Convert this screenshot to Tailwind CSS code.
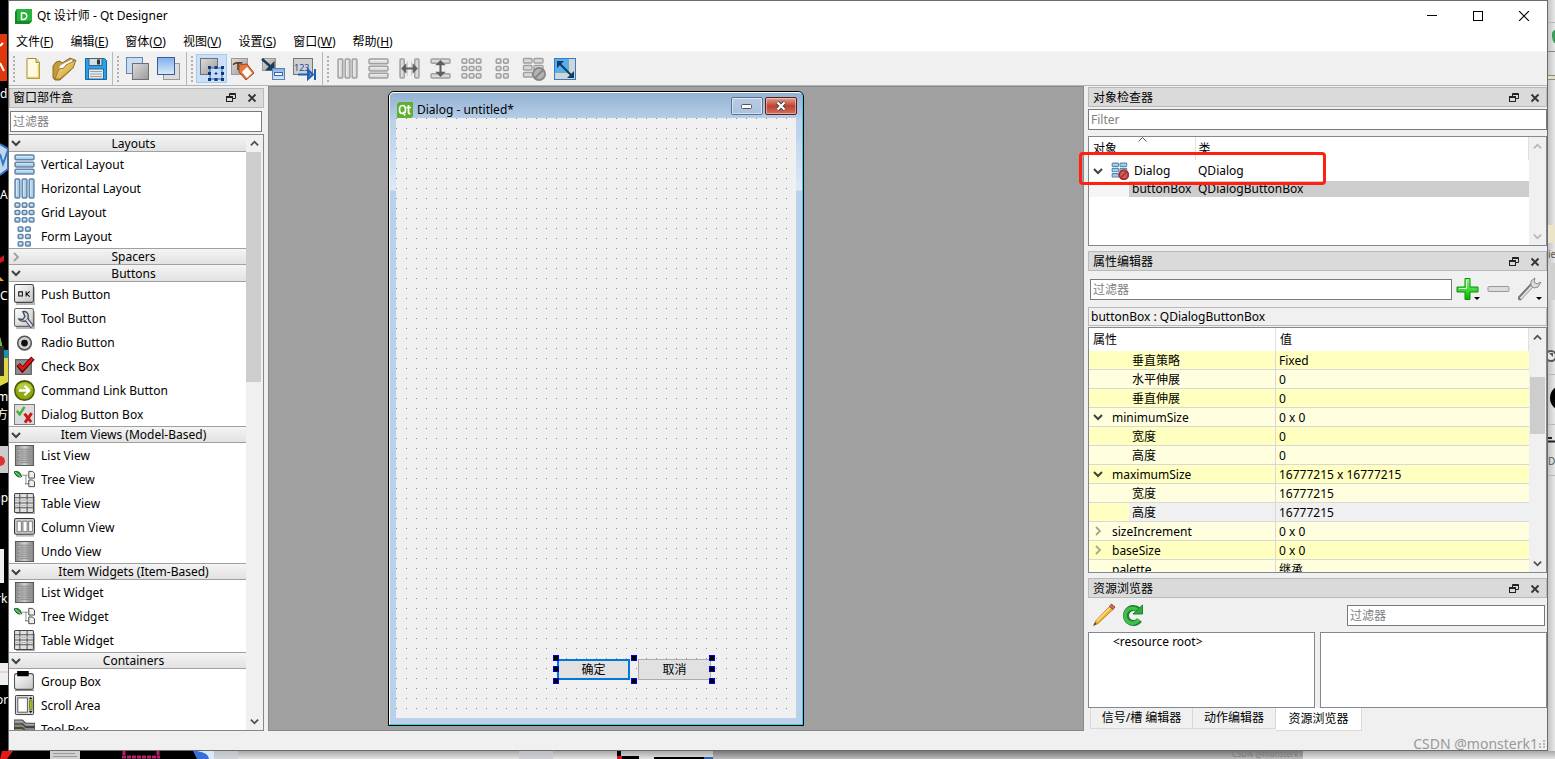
<!DOCTYPE html>
<html lang="zh-CN">
<head>
    <meta charset="UTF-8">
    <meta name="viewport" content="width=device-width, initial-scale=1.0">
    <title>Qt 设计师 - Qt Designer</title>
    <script src="https://cdn.jsdelivr.net/npm/@tailwindcss/browser@4"></script>
    <style>
        body {
            font-family: 'Noto Sans', 'Noto Sans CJK SC', sans-serif;
        }
    </style>
</head>
<body class="h-screen flex flex-col overflow-hidden bg-[#e0e0e0] text-[12px] leading-[18px] text-black select-none">

    <!-- Icon library -->
    <svg class="absolute w-0 h-0" aria-hidden="true">
        <defs>
            <linearGradient id="g-gray" x1="0" y1="0" x2="1" y2="1"><stop offset="0" stop-color="#dcdcdc"/><stop offset="1" stop-color="#9a9a9a"/></linearGradient>
            <linearGradient id="g-blue" x1="0" y1="0" x2="0" y2="1"><stop offset="0" stop-color="#7fb0ee"/><stop offset="1" stop-color="#dbe9fb"/></linearGradient>
            <linearGradient id="g-gold" x1="0" y1="0" x2="1" y2="1"><stop offset="0" stop-color="#fdeaa0"/><stop offset="1" stop-color="#c98f1c"/></linearGradient>
            <linearGradient id="g-green" x1="0" y1="0" x2="0" y2="1"><stop offset="0" stop-color="#8dff7a"/><stop offset="1" stop-color="#00b400"/></linearGradient>
            <linearGradient id="g-face" x1="0" y1="0" x2="1" y2="1"><stop offset="0" stop-color="#ffffff"/><stop offset="1" stop-color="#c4c4c4"/></linearGradient>
            <linearGradient id="g-list" x1="0" y1="0" x2="1" y2="0"><stop offset="0" stop-color="#888"/><stop offset=".5" stop-color="#d0d0d0"/><stop offset="1" stop-color="#808080"/></linearGradient>
        </defs>
        <!-- Layout icons take the outline from text color and the face from fill -->
        <symbol id="vbars" viewBox="0 0 20 20"><g stroke="currentColor" stroke-width="1.400"><rect x="1" y="1" width="4.500" height="18" rx="1"/><rect x="7.800" y="1" width="4.500" height="18" rx="1"/><rect x="14.500" y="1" width="4.500" height="18" rx="1"/></g><path d="M2.500 2v15M9.300 2v15M16 2v15" stroke="#fff" stroke-opacity=".6"/></symbol>
        <symbol id="hbars" viewBox="0 0 20 20"><g stroke="currentColor" stroke-width="1.400"><rect x="1" y="1" width="18" height="4.500" rx="1"/><rect x="1" y="7.800" width="18" height="4.500" rx="1"/><rect x="1" y="14.500" width="18" height="4.500" rx="1"/></g><path d="M2 2.500h16M2 9.300h16M2 16h16" stroke="#fff" stroke-opacity=".6"/></symbol>
        <symbol id="hsplit" viewBox="0 0 20 20"><g stroke="currentColor" stroke-width="1.400"><rect x="1" y="1" width="4" height="18" rx="1"/><rect x="15" y="1" width="4" height="18" rx="1"/></g><path d="M8 3v14M12 3v14" stroke="#ccc"/><path d="M2 10l5-5v4h6V5l5 5-5 5v-4H7v4z" fill="#606060"/></symbol>
        <symbol id="vsplit" viewBox="0 0 20 20"><g stroke="currentColor" stroke-width="1.400"><rect x="1" y="1" width="18" height="4" rx="1"/><rect x="1" y="15" width="18" height="4" rx="1"/></g><path d="M10 2l5 5h-4v6h4l-5 5-5-5h4V7H5z" fill="#606060"/></symbol>
        <symbol id="grid9" viewBox="0 0 20 20"><g stroke="currentColor" stroke-width="1.400"><rect x="1" y="1" width="4.500" height="4" rx="1"/><rect x="7.800" y="1" width="4.500" height="4" rx="1"/><rect x="14.500" y="1" width="4.500" height="4" rx="1"/><rect x="1" y="8" width="4.500" height="4" rx="1"/><rect x="7.800" y="8" width="4.500" height="4" rx="1"/><rect x="14.500" y="8" width="4.500" height="4" rx="1"/><rect x="1" y="15" width="4.500" height="4" rx="1"/><rect x="7.800" y="15" width="4.500" height="4" rx="1"/><rect x="14.500" y="15" width="4.500" height="4" rx="1"/></g><path d="M2 2.500h2M9 2.500h2M15.500 2.500h2M2 9.500h2M9 9.500h2M15.500 9.500h2M2 16.500h2M9 16.500h2M15.500 16.500h2" stroke="#fff" stroke-opacity=".8"/></symbol>
        <symbol id="form6" viewBox="0 0 20 20"><g stroke="currentColor" stroke-width="1.400"><rect x="4" y="1" width="4.500" height="4" rx="1"/><rect x="11" y="1" width="4.500" height="4" rx="1"/><rect x="4" y="8" width="4.500" height="4" rx="1"/><rect x="11" y="8" width="4.500" height="4" rx="1"/><rect x="4" y="15" width="4.500" height="4" rx="1"/><rect x="11" y="15" width="4.500" height="4" rx="1"/></g><path d="M5 2.500h2M12 2.500h2M5 9.500h2M12 9.500h2M5 16.500h2M12 16.500h2" stroke="#fff" stroke-opacity=".8"/></symbol>
        <symbol id="break" viewBox="0 0 24 24"><g stroke="currentColor" stroke-width="1.400"><rect x="1.500" y="1.500" width="8.500" height="4.500" rx="1"/><rect x="12" y="1.500" width="9" height="4.500" rx="1"/><rect x="1.500" y="8.500" width="8.500" height="4.500" rx="1"/><rect x="12" y="8.500" width="9" height="4.500" rx="1"/><rect x="1.500" y="15.500" width="9" height="4.500" rx="1"/></g></symbol>
        <symbol id="chev-down" viewBox="0 0 10 10"><path d="M1 3l4 4 4-4" fill="none" stroke="currentColor" stroke-width="2"/></symbol>
        <symbol id="chev-up" viewBox="0 0 10 10"><path d="M1 7l4-4 4 4" fill="none" stroke="currentColor" stroke-width="2"/></symbol>
        <symbol id="chev-right" viewBox="0 0 10 10"><path d="M3 1l4 4-4 4" fill="none" stroke="currentColor" stroke-width="1.800"/></symbol>
        <symbol id="float" viewBox="0 0 10 10"><path d="M3.500 3V.5h6v5H7M3.500 1.500h6" fill="none" stroke="#222"/><rect x=".5" y="3.500" width="6" height="5" fill="none" stroke="#222"/><path d="M.5 4.500h6" stroke="#222"/></symbol>
        <symbol id="cross" viewBox="0 0 10 10"><path d="M1.500 1.500l7 7M8.500 1.500l-7 7" stroke="#333" stroke-width="1.800"/></symbol>
        <symbol id="i-push" viewBox="0 0 20 20"><path d="M2 19h17V3" stroke="#888" stroke-width="2" fill="none" opacity=".6"/><rect x=".5" y=".5" width="18" height="17" rx="1.500" fill="url(#g-face)" stroke="#444"/><path d="M4.500 7.500h3.500v4H4.500zM11.500 7v5M15 7l-3 2.500 3 2.500" fill="none" stroke="#111"/></symbol>
        <symbol id="i-tool" viewBox="0 0 20 20"><path d="M2 19h17V3" stroke="#888" stroke-width="2" fill="none" opacity=".6"/><rect x=".5" y=".5" width="18" height="17" rx="1.500" fill="url(#g-face)" stroke="#666"/><path d="M8.500 3.500a4 4 0 0 1 5 4.500 4 4 0 0 1-5 4.500 4 4 0 0 1-4-2l4 .3L10.500 8z" fill="#d8dce4" stroke="#444b5c" stroke-width="1.300"/><path d="M12 11l5.500 7" stroke="#444b5c" stroke-width="4"/><path d="M12 11l5 6.500" stroke="#dde0e8" stroke-width="2"/></symbol>
        <symbol id="i-radio" viewBox="0 0 20 20"><circle cx="10" cy="10.500" r="6.500" fill="#d0d0d0" stroke="#555" stroke-width="1.500"/><circle cx="10" cy="10.500" r="3.200" fill="#111"/></symbol>
        <symbol id="i-check" viewBox="0 0 20 20"><rect x="1.500" y="3.500" width="15" height="14" fill="#909090" stroke="#555"/><path d="M4 8l4 5L18 2" fill="none" stroke="#6a0000" stroke-width="4.500"/><path d="M4.500 8.500l3.500 4L17.500 2.500" fill="none" stroke="#e01818" stroke-width="2.500"/></symbol>
        <symbol id="i-link" viewBox="0 0 20 20"><circle cx="10" cy="10" r="9.200" fill="#8faa10" stroke="#4d5c08" stroke-width="1.500"/><path d="M2.500 8a8 8 0 0 1 15 0q-7 3-15 0" fill="#d0e060" opacity=".6"/><path d="M4.500 10h9M10 5.500l4.500 4.500-4.500 4.500" fill="none" stroke="#fff" stroke-width="2.200"/></symbol>
        <symbol id="i-dbb" viewBox="0 0 22 22"><rect x=".5" y=".5" width="21" height="21" fill="#dcdcdc" stroke="#777"/><path d="M3 7l3 4 5-8" fill="none" stroke="#48b030" stroke-width="2.500"/><path d="M11 10l7 9M18.500 9.500l-7 10" stroke="#c81818" stroke-width="3"/></symbol>
        <symbol id="i-list" viewBox="0 0 20 22"><rect x=".5" y=".5" width="19" height="21" fill="url(#g-list)" stroke="#555"/><path d="M3 4.500h2M3 8.500h2M3 12.500h2M3 16.500h2M6 4.500h10M6 6.500h10M6 8.500h10M6 10.500h10M6 12.500h10M6 14.500h10M6 16.500h10M6 18.500h10" stroke="#787878" stroke-width=".8"/></symbol>
        <symbol id="i-tree" viewBox="0 0 22 18"><path d="M0 1q6-2 8 5-5 2-8-5z" fill="#2c9c3c" stroke="#0a4a18"/><path d="M1 1l7 6" stroke="#9de8a0"/><path d="M9 4.500h5M12.500 5v9M12 13.500h3" stroke="#222" stroke-dasharray="1 1" fill="none"/><path d="M15.500.5h4l2 2v5h-6zM15.500 9.500h4l2 2v5h-6z" fill="#eee" stroke="#444"/></symbol>
        <symbol id="i-table" viewBox="0 0 20 20"><path d="M2 19.500h17.500V3" stroke="#888" fill="none" opacity=".7"/><rect x=".5" y=".5" width="18" height="18" rx="1" fill="#e0e0e0" stroke="#444"/><path d="M.5 4.500h18M.5 9.500h18M.5 14h18M5.500.5v18M12.500.5v18" stroke="#555"/><path d="M1 7h17M1 12h17" stroke="#bbb"/></symbol>
        <symbol id="i-column" viewBox="0 0 20 18"><rect x=".5" y=".5" width="19" height="15" rx="1.500" fill="#cfcfcf" stroke="#333"/><path d="M3 3h4v10H3zM8.500 3h4v10h-4zM14 3h3.500v10H14z" fill="#fff" stroke="#666" stroke-width=".8"/><path d="M2 17h17" stroke="#999"/></symbol>
        <symbol id="i-group" viewBox="0 0 20 20"><rect x=".5" y="2.500" width="18" height="15" rx="2" fill="url(#g-face)" stroke="#555"/><path d="M1 18.500h18" stroke="#888"/><rect x="3" y="0" width="11" height="5" fill="#000"/></symbol>
        <symbol id="i-scroll" viewBox="0 0 20 22"><rect x="0.500" y=".5" width="19" height="20" rx="1" fill="#d8d8d8" stroke="#333"/><rect x="3" y="3" width="10" height="15" fill="#fff" stroke="#555"/><path d="M14.500 4.500l2-2.500 2 2.500zM14.500 16.500l2 2.500 2-2.500z" fill="#111"/><rect x="15" y="6" width="3" height="9" fill="#9ac020" stroke="#4d6008" stroke-width=".6"/></symbol>
        <symbol id="i-toolbox" viewBox="0 0 20 20"><path d="M0 1h8l3 3h9v3h-9l-3-3H0z" fill="#aaa" stroke="#444"/><path d="M0 5h8l3 3h9v3h-9l-3-3H0z" fill="#888" stroke="#444"/><path d="M0 9h8l3 3h9v8H0z" fill="#8fae10" stroke="#444"/></symbol>
    </svg>

    <div class="flex-1 min-h-0 flex">
        <!-- Desktop showing left of the window -->
        <svg class="w-[8px] h-full shrink-0 bg-black" aria-hidden="true" font-size="12" fill="#fff">
            <rect y="34" width="7" height="47" fill="#e0380c"/><path d="M0 46l3-3M0 63l4 8" stroke="#fff" stroke-width="2"/>
            <path d="M0 144l8 5v20l-8 6" fill="#bfd8f0"/><path d="M0 144l8 5v20l-8 6M0 154l3 10 5-14" stroke="#3478c0" stroke-width="2" fill="none"/>
            <path d="M0 258l4-3v6l-4 2z" fill="#d01818"/><path d="M0 281h4l-4-4z" fill="#f0a020"/>
            <path d="M0 337l3 12 5 3v30l-8 4z" fill="#e0d840"/><path d="M0 337l3 12-3 1z" fill="#70c040"/><path d="M4 350h4v8H4z" fill="#2090b0"/><path d="M0 346h4v30H0z" fill="#303030"/>
            <rect y="446" width="8" height="27" fill="#ccc"/><circle cx="0" cy="461" r="5" fill="#e03030"/>
            <rect y="549" width="4" height="34" fill="#eee"/><rect y="663" width="8" height="22" fill="#eee"/><path d="M0 672h8" stroke="#f0b0a0"/>
            <text x="0" y="98">d</text><text x="0" y="199">A</text><text x="0" y="300">C</text><text x="-3" y="401">m</text><text x="-4" y="419">方</text><text x="-6" y="502">ap</text><text x="-4" y="603">rk</text><text x="-4" y="704">or</text>
        </svg>

        <!-- Application window -->
        <div class="flex-1 min-w-0 flex flex-col border border-[#6b6b6b] bg-[#f0f0f0]">
            <header class="h-[30px] shrink-0 bg-white flex items-center pl-[6px]">
                <svg class="w-[17px] h-[15px]" viewBox="0 0 17 15"><path d="M2 0h15v12l-3 3H0V3z" fill="#28b43c"/><path d="M0 3l2-3v12l-2 3zM14 15l3-3H2l-2 3z" fill="#128a28"/><path d="M6.500 3.500v7M6 4h2.500a3 3 0 0 1 0 6.500H6" fill="none" stroke="#fff" stroke-width="1.500"/></svg>
                <h1 class="pl-[5px] flex-1">Qt 设计师 - Qt Designer</h1>
                <button class="w-[46px] h-[29px] flex items-center justify-center" aria-label="最小化"><svg class="w-[10px] h-[10px]"><path d="M0 4.500h10" stroke="#000"/></svg></button>
                <button class="w-[46px] h-[29px] flex items-center justify-center" aria-label="最大化"><svg class="w-[10px] h-[10px]"><rect x=".5" y=".5" width="9" height="9" fill="none" stroke="#000"/></svg></button>
                <button class="w-[46px] h-[29px] flex items-center justify-center" aria-label="关闭"><svg class="w-[10px] h-[10px]"><path d="M0 0l10 10M10 0L0 10" stroke="#000" stroke-width="1.200"/></svg></button>
            </header>

            <nav class="h-[21px] shrink-0 bg-white border-b border-[#f5f5f5] flex items-center gap-[17px] pl-[7px] pt-[2px]">
                <button>文件(<u>F</u>)</button>
                <button>编辑(<u>E</u>)</button>
                <button>窗体(<u>O</u>)</button>
                <button>视图(<u>V</u>)</button>
                <button>设置(<u>S</u>)</button>
                <button>窗口(<u>W</u>)</button>
                <button>帮助(<u>H</u>)</button>
            </nav>

            <div class="h-[34px] shrink-0 flex items-center border-b border-[#b4b4b4]" role="toolbar">
                <div class="h-full flex items-center border-r border-[#b8b8b8] pr-px">
                    <span class="w-[9px] h-[26px] flex justify-center"><i class="border-l-2 border-dotted border-[#b0b0b0]"></i></span>
                    <button class="w-[31px] h-[29px] flex items-center justify-center" aria-label="新建"><svg class="w-[24px] h-[24px]" viewBox="0 0 24 24"><path d="M5 1.500h9l3.500 4v16H5z" fill="#fffbe0" stroke="#a88a30"/><path d="M14 1.500v4h3.500" fill="#e8d890" stroke="#a88a30"/><path d="M6 20.500h10.500V7" stroke="#e8d060" stroke-width="1.500" fill="none"/></svg></button>
                    <button class="w-[31px] h-[29px] flex items-center justify-center" aria-label="打开"><svg class="w-[26px] h-[24px]" viewBox="0 0 26 24"><path d="M1 21V9l3-4 4-1 2 2 8-5 5 2-2 8-13 12H3z" fill="#c79a38" stroke="#8a6a24"/><path d="M4 18L8 8l12-6 2 4L8 19z" fill="#fff" stroke="#b0a070"/><path d="M3 22l4-10 5-1 2-3 10-5-3 8-13 11z" fill="url(#g-gold)" stroke="#9a7828"/></svg></button>
                    <button class="w-[31px] h-[29px] flex items-center justify-center" aria-label="保存"><svg class="w-[24px] h-[24px]" viewBox="0 0 24 24"><path d="M1.500 1.500h19l2 2v19h-21z" fill="#2ba0e8" stroke="#1068a8"/><rect x="5" y="1.500" width="13" height="7" fill="#d8dde2" stroke="#3a6080"/><rect x="13" y="2.500" width="3" height="5" fill="#333"/><rect x="4.500" y="12" width="15" height="10" fill="#e8e8e8" stroke="#1a70a8"/><path d="M6 14.500h12M6 17h12M6 19.500h12" stroke="#a0a0a0"/></svg></button>
                </div>
                <div class="h-full flex items-center border-r border-[#b8b8b8] pr-[2px]">
                    <span class="w-[9px] h-[26px] flex justify-center"><i class="border-l-2 border-dotted border-[#b0b0b0]"></i></span>
                    <button class="w-[31px] h-[29px] flex items-center justify-center" aria-label="后置"><svg class="w-[25px] h-[24px]" viewBox="0 0 25 24"><rect x="1.500" y=".5" width="16" height="16" fill="#c9dcf5" stroke="#6884b0"/><rect x="7.500" y="6.500" width="16" height="16" fill="url(#g-gray)" stroke="#707070"/></svg></button>
                    <button class="w-[31px] h-[29px] flex items-center justify-center" aria-label="前置"><svg class="w-[25px] h-[24px]" viewBox="0 0 25 24"><rect x="7.500" y="6.500" width="16" height="16" fill="#dcdcdc" stroke="#999"/><rect x="1.500" y=".5" width="17" height="17" fill="url(#g-blue)" stroke="#3a5c90"/></svg></button>
                </div>
                <div class="h-full flex items-center border-r border-[#b8b8b8] pr-[2px]">
                    <span class="w-[9px] h-[26px] flex justify-center"><i class="border-l-2 border-dotted border-[#b0b0b0]"></i></span>
                    <button class="w-[31px] h-[29px] flex items-center justify-center bg-[#c9e0f7] border border-[#a2cdf2]" aria-label="编辑窗口部件" aria-pressed="true"><svg class="w-[25px] h-[24px]" viewBox="0 0 25 24"><rect x="1.500" y="1.500" width="17" height="16" fill="url(#g-gray)" stroke="#707070"/><rect x="11" y="11" width="12" height="11" fill="#c4dcf8" stroke="#3a60a0"/><g fill="#123a78"><rect x="9" y="9" width="3" height="3"/><rect x="15.500" y="9" width="3" height="3"/><rect x="22" y="9" width="3" height="3"/><rect x="9" y="15" width="3" height="3"/><rect x="22" y="15" width="3" height="3"/><rect x="9" y="21" width="3" height="3"/><rect x="15.500" y="21" width="3" height="3"/><rect x="22" y="21" width="3" height="3"/></g><path d="M17 15v3M15.500 16.500h3" stroke="#123a78"/></svg></button>
                    <button class="w-[31px] h-[29px] flex items-center justify-center" aria-label="编辑信号/槽"><svg class="w-[25px] h-[24px]" viewBox="0 0 25 24"><rect x="1.500" y="1.500" width="16" height="16" fill="url(#g-gray)" stroke="#999"/><path d="M3.500 8q0-3 9-2M8 6v7" fill="none" stroke="#5a3020" stroke-width="1.500"/><path d="M9 8l8-1 7 9-8 7-7-8z" fill="#e87840" stroke="#a04818"/><path d="M12 15l5-5 5 6-5 5z" fill="#fff"/></svg></button>
                    <button class="w-[31px] h-[29px] flex items-center justify-center" aria-label="编辑伙伴"><svg class="w-[25px] h-[24px]" viewBox="0 0 25 24"><rect x="1.500" y="1.500" width="13" height="12" fill="url(#g-gray)" stroke="#999"/><path d="M1 2l9 8" stroke="#1a3c58" stroke-width="2.500"/><path d="M13.500 4v9.500H4z" fill="#1a3c58"/><rect x="11.500" y="11.500" width="12" height="11" fill="url(#g-blue)" stroke="#6080a8"/><rect x="13.500" y="15.500" width="8" height="3" fill="#fff" stroke="#3a68b0"/></svg></button>
                    <button class="w-[31px] h-[29px] flex items-center justify-center" aria-label="编辑 Tab 顺序"><svg class="w-[25px] h-[24px]" viewBox="0 0 25 24"><rect x="1.500" y="1.500" width="19" height="16" fill="#cfcfcf" stroke="#777"/><text x="2" y="14" font-size="9" fill="#1848a0">123</text><path d="M6 17.500h12M16 13l5 4.500-5 4.500zM23 12v11" fill="#68a8f0" stroke="#2060b0" stroke-width="2"/></svg></button>
                </div>
                <div class="h-full flex items-center text-[#a0a0a0] fill-[#dadada]">
                    <span class="w-[9px] h-[26px] flex justify-center"><i class="border-l-2 border-dotted border-[#b0b0b0]"></i></span>
                    <button class="w-[31px] h-[29px] flex items-center justify-center" aria-label="水平布局" disabled><svg class="w-[21px] h-[21px]"><use href="#vbars"/></svg></button>
                    <button class="w-[31px] h-[29px] flex items-center justify-center" aria-label="垂直布局" disabled><svg class="w-[21px] h-[21px]"><use href="#hbars"/></svg></button>
                    <button class="w-[31px] h-[29px] flex items-center justify-center" aria-label="使用分裂器水平布局" disabled><svg class="w-[21px] h-[21px]"><use href="#hsplit"/></svg></button>
                    <button class="w-[31px] h-[29px] flex items-center justify-center" aria-label="使用分裂器垂直布局" disabled><svg class="w-[21px] h-[21px]"><use href="#vsplit"/></svg></button>
                    <button class="w-[31px] h-[29px] flex items-center justify-center" aria-label="栅格布局" disabled><svg class="w-[21px] h-[21px]"><use href="#grid9"/></svg></button>
                    <button class="w-[31px] h-[29px] flex items-center justify-center" aria-label="窗体布局" disabled><svg class="w-[21px] h-[21px]"><use href="#form6"/></svg></button>
                    <button class="w-[31px] h-[29px] flex items-center justify-center" aria-label="打破布局" disabled><svg class="w-[24px] h-[24px]" viewBox="0 0 24 24"><use href="#break"/><circle cx="17" cy="17" r="6" fill="#b4b4b4" stroke="#888" stroke-width="2"/><path d="M13 21l8-8" stroke="#888" stroke-width="2"/></svg></button>
                    <button class="w-[31px] h-[29px] flex items-center justify-center" aria-label="调整大小"><svg class="w-[24px] h-[24px]" viewBox="0 0 24 24"><rect x="1.500" y="1.500" width="21" height="21" fill="#d4d4d4" stroke="#2f7fc8"/><rect x="2" y="2" width="14" height="14" fill="#58b0e8"/><path d="M6 6l13 13" stroke="#123c60" stroke-width="2"/><path d="M4 4h7l-7 7zM21 21h-7l7-7z" fill="#123c60"/></svg></button>
                </div>
            </div>

            <main class="flex-1 min-h-0 flex gap-1">
                <!-- Widget box -->
                <section class="w-[255px] shrink-0 flex flex-col pt-[2px]">
                    <div class="h-[20px] shrink-0 bg-[#dadada] border border-[#b9b9b9] flex items-center pl-[3px] pr-[6px]">
                        <h2 class="flex-1">窗口部件盒</h2>
                        <button class="w-[10px] mr-[11px]" aria-label="浮动"><svg class="w-[10px] h-[10px]"><use href="#float"/></svg></button>
                        <button class="w-[10px]" aria-label="关闭"><svg class="w-[10px] h-[10px]"><use href="#cross"/></svg></button>
                    </div>
                    <input class="h-[21px] shrink-0 ml-px mr-[2px] mt-[3px] mb-[2px] px-[2px] bg-white border border-[#7a7a7a] placeholder:text-[#808080]" placeholder="过滤器" aria-label="过滤器">
                    <div class="flex-1 min-h-0 flex bg-white border border-[#828790] border-l-0">
                        <div id="toolbox" class="flex-1 overflow-hidden"></div>
                        <div class="w-[17px] bg-[#f0f0f0] flex flex-col items-center text-[#505050]">
                            <button class="h-[17px] flex items-center" aria-label="向上滚动"><svg class="w-[9px] h-[9px]"><use href="#chev-up"/></svg></button>
                            <div class="flex-1 w-full"><div class="h-[41%] w-[15px] bg-[#cdcdcd]"></div></div>
                            <button class="h-[17px] flex items-center" aria-label="向下滚动"><svg class="w-[9px] h-[9px]"><use href="#chev-down"/></svg></button>
                        </div>
                    </div>
                </section>

                <!-- Form editing area -->
                <section class="flex-1 relative bg-[#a0a0a0] border border-[#828790] overflow-hidden">
                    <div class="absolute left-[119px] top-[4px] w-[416px] h-[635px] flex flex-col border border-black rounded-t-[6px] bg-[#b9d1ea] overflow-hidden">
                        <div class="flex-1 min-h-0 flex flex-col rounded-t-[5px] border border-t-white border-l-white border-r-[#2ad0ee] border-b-[#2ad0ee] bg-[linear-gradient(#94b2d3_0px,#bcd3ec_30px,#bcd3ec_36px,#dde9f7_97px,#b9d1ea_98px)]">
                            <div class="h-[25px] shrink-0 flex pl-[7px] pr-[5px]">
                                <svg class="w-[16px] h-[16px] mt-[9px]" viewBox="0 0 16 16"><path d="M2 0h14v14l-2 2H0V2z" fill="#60b030"/><path d="M5.500 3.500c-4 0-4 8 0 8s4-8 0-8M6 10l2 3.500M11.500 3v7.500q0 1.500 2 1M9.500 5.500h4.500" fill="none" stroke="#fff" stroke-width="1.700"/></svg>
                                <h3 class="flex-1 pl-[4px] pt-[8px]">Dialog - untitled*</h3>
                                <button class="w-[32px] h-[18px] mt-[4px] mr-[2px] rounded-[2px] border border-[#5b7391] outline outline-white/50 -outline-offset-2 bg-linear-to-b from-[#b9cce2] to-[#a9c2df] flex items-center justify-center" aria-label="最小化"><svg class="w-[12px] h-[6px]"><rect x=".5" y="1.500" width="10" height="4" rx="1" fill="#fff" stroke="#556"/></svg></button>
                                <button class="w-[32px] h-[18px] mt-[4px] rounded-[2px] border border-[#5a1c18] outline outline-white/40 -outline-offset-2 bg-linear-to-b from-[#e0a090] via-[#c0402c] to-[#d07060] flex items-center justify-center" aria-label="关闭"><svg class="w-[12px] h-[10px]" viewBox="0 0 12 10"><path d="M2.500 1.500l7 7M9.500 1.500l-7 7" stroke="#445" stroke-width="4"/><path d="M2.500 1.500l7 7M9.500 1.500l-7 7" stroke="#fff" stroke-width="2.200"/></svg></button>
                            </div>
                            <div class="flex-1 relative mx-[6px] mb-[6px] bg-[#f0f0f0]">
                                <svg class="absolute inset-0 w-full h-full"><defs><pattern id="dots" width="10" height="10" patternUnits="userSpaceOnUse"><rect width="1" height="1" fill="#8c8c8c"/></pattern></defs><rect width="100%" height="100%" fill="url(#dots)"/></svg>
                                <div class="absolute left-[161px] top-[541px] flex gap-2">
                                    <button class="w-[73px] h-[21px] bg-[#e1e1e1] border-2 border-[#0078d7] flex items-center justify-center">确定</button>
                                    <button class="w-[73px] h-[21px] bg-[#e1e1e1] border border-[#adadad] flex items-center justify-center">取消</button>
                                </div>
                                <svg class="absolute left-[157px] top-[537px] w-[162px] h-[30px]"><g fill="#000" stroke="#0000e0"><rect x=".5" y=".5" width="5" height="5"/><rect x="78.500" y=".5" width="5" height="5"/><rect x="156.500" y=".5" width="5" height="5"/><rect x=".5" y="11.500" width="5" height="5"/><rect x="156.500" y="11.500" width="5" height="5"/><rect x=".5" y="23.500" width="5" height="5"/><rect x="78.500" y="23.500" width="5" height="5"/><rect x="156.500" y="23.500" width="5" height="5"/></g></svg>
                            </div>
                        </div>
                    </div>
                </section>

                <!-- Docked editors -->
                <aside class="w-[459px] shrink-0 flex flex-col pt-px">
                    <section class="relative flex flex-col">
                        <div class="h-[20px] bg-[#dadada] border border-[#b9b9b9] flex items-center pl-[4px] pr-[6px] pt-px">
                            <h2 class="flex-1">对象检查器</h2>
                            <button class="w-[10px] mr-[11px]" aria-label="浮动"><svg class="w-[10px] h-[10px]"><use href="#float"/></svg></button>
                            <button class="w-[10px]" aria-label="关闭"><svg class="w-[10px] h-[10px]"><use href="#cross"/></svg></button>
                        </div>
                        <input class="h-[21px] mt-[2px] px-[2px] bg-white border border-[#7a7a7a] placeholder:text-[#808080]" placeholder="Filter" aria-label="Filter">
                        <div class="h-[110px] mt-[6px] bg-white border border-[#828790] flex">
                            <div class="flex-1 relative">
                                <table class="w-full table-fixed border-collapse">
                                    <thead>
                                        <tr class="h-[23px] text-left">
                                            <th class="w-[106px] p-0 pl-[4px] font-normal border-r border-[#e0e0e0]">对象</th>
                                            <th class="p-0 pl-[3px] font-normal border-r border-[#e0e0e0]">类</th>
                                        </tr>
                                    </thead>
                                    <tbody>
                                        <tr class="h-[21px]">
                                            <td class="p-0"><div class="flex items-center pl-[4px]"><svg class="w-[10px] h-[10px] text-[#404040]"><use href="#chev-down"/></svg><svg class="w-[18px] h-[18px] ml-[8px] mr-[5px] text-[#5c86ac] fill-[#9fd0f0]" viewBox="0 0 24 24"><use href="#break"/><circle cx="17" cy="17" r="6" fill="#d06060" stroke="#a03030" stroke-width="2.500"/><path d="M13 21l8-8" stroke="#a03030" stroke-width="2"/></svg>Dialog</div></td>
                                            <td class="p-0 pl-[3px]">QDialog</td>
                                        </tr>
                                        <tr class="h-[16px] leading-[16px]">
                                            <td class="p-0"><div class="flex"><span class="w-[40px] bg-[#f5f5f5]"></span><span class="flex-1 pl-[3px] bg-[#cdcdcd]">buttonBox</span></div></td>
                                            <td class="p-0 pl-[3px] bg-[#cdcdcd]">QDialogButtonBox</td>
                                        </tr>
                                    </tbody>
                                </table>
                                <svg class="absolute left-[49px] top-0 w-[9px] h-[5px]"><path d="M.5 4.500l4-4 4 4" fill="none" stroke="#555"/></svg>
                            </div>
                            <div class="w-[17px] bg-[#f0f0f0] flex flex-col items-center justify-between text-[#b8b8b8]">
                                <button class="h-[19px] flex items-center" aria-label="向上滚动"><svg class="w-[9px] h-[9px]"><use href="#chev-up"/></svg></button>
                                <button class="h-[17px] flex items-center" aria-label="向下滚动"><svg class="w-[9px] h-[9px]"><use href="#chev-down"/></svg></button>
                            </div>
                        </div>
                        <div class="absolute left-[-9px] top-[65px] w-[247px] h-[33px] border-3 border-[#ff2010] rounded-[4px]"></div>
                    </section>

                    <section class="flex flex-col mt-[5px]">
                        <div class="h-[20px] bg-[#dadada] border border-[#b9b9b9] flex items-center pl-[4px] pr-[6px] pt-px">
                            <h2 class="flex-1">属性编辑器</h2>
                            <button class="w-[10px] mr-[11px]" aria-label="浮动"><svg class="w-[10px] h-[10px]"><use href="#float"/></svg></button>
                            <button class="w-[10px]" aria-label="关闭"><svg class="w-[10px] h-[10px]"><use href="#cross"/></svg></button>
                        </div>
                        <div class="h-[36px] flex items-center pl-[2px] pr-[5px]">
                            <input class="flex-1 h-[21px] px-[2px] bg-white border border-[#7a7a7a] placeholder:text-[#808080]" placeholder="过滤器" aria-label="过滤属性">
                            <button class="ml-[4px]" aria-label="添加动态属性"><svg class="w-[24px] h-[24px]" viewBox="0 0 24 24"><path d="M9 1.500h5V10h8v5h-8v7.500H9V15H1v-5h8z" fill="url(#g-green)" stroke="#089008"/><path d="M10.500 3v8.500H3" stroke="#d8ffd0" fill="none"/><path d="M18 20h6l-3 3z" fill="#000"/></svg></button>
                            <button class="ml-[7px]" aria-label="删除动态属性" disabled><svg class="w-[24px] h-[24px]" viewBox="0 0 24 24"><rect x="1" y="9.500" width="21" height="5" rx="1" fill="#dcdcdc" stroke="#999"/></svg></button>
                            <button class="ml-[7px]" aria-label="配置属性编辑器"><svg class="w-[24px] h-[24px]" viewBox="0 0 24 24"><path d="M2 21L15 7" stroke="#777" stroke-width="4.500" stroke-linecap="round"/><path d="M3 21L16 7" stroke="#e0e0e0" stroke-width="2" stroke-linecap="round"/><path d="M13 9V4l4-3-1 4 3 2 4-2-3 5-4 1z" fill="#ddd" stroke="#888"/><path d="M18 20h6l-3 3z" fill="#000"/></svg></button>
                        </div>
                        <p class="h-[19px] border border-[#b9b9b9] pl-[2px] flex items-center">buttonBox : QDialogButtonBox</p>
                        <div class="h-[246px] mt-px bg-white border border-[#828790] flex">
                            <div class="flex-1 overflow-hidden">
                                <table class="w-full table-fixed border-separate border-spacing-0">
                                    <thead>
                                        <tr class="h-[23px] text-left">
                                            <th class="w-[187px] p-0 pl-[4px] font-normal border-r border-[#e0e0e0]">属性</th>
                                            <th class="p-0 pl-[4px] font-normal border-r border-[#e0e0e0]">值</th>
                                        </tr>
                                    </thead>
                                    <tbody id="properties"></tbody>
                                </table>
                            </div>
                            <div class="w-[17px] bg-[#f0f0f0] flex flex-col items-center text-[#505050]">
                                <button class="h-[19px] flex items-center" aria-label="向上滚动"><svg class="w-[9px] h-[9px]"><use href="#chev-up"/></svg></button>
                                <div class="flex-1 w-full pt-[30px] pl-px"><div class="h-[57px] w-[15px] bg-[#cdcdcd]"></div></div>
                                <button class="h-[17px] flex items-center" aria-label="向下滚动"><svg class="w-[9px] h-[9px]"><use href="#chev-down"/></svg></button>
                            </div>
                        </div>
                    </section>

                    <section class="flex-1 min-h-0 flex flex-col mt-[5px]">
                        <div class="h-[20px] shrink-0 bg-[#dadada] border border-[#b9b9b9] flex items-center pl-[4px] pr-[6px] pt-px">
                            <h2 class="flex-1">资源浏览器</h2>
                            <button class="w-[10px] mr-[11px]" aria-label="浮动"><svg class="w-[10px] h-[10px]"><use href="#float"/></svg></button>
                            <button class="w-[10px]" aria-label="关闭"><svg class="w-[10px] h-[10px]"><use href="#cross"/></svg></button>
                        </div>
                        <div class="h-[34px] shrink-0 flex items-center pl-[4px] pr-[2px]">
                            <button aria-label="编辑资源"><svg class="w-[24px] h-[24px]" viewBox="0 0 24 24"><path d="M1.500 22.500L4 17.500 18 3l3.500 3L6 20.500z" fill="#f0b030" stroke="#b07c20" stroke-width=".8"/><path d="M5 18L18 5" stroke="#ffe090" stroke-width="1.500"/><path d="M17.500 3.500l2-2.500 3.500 3-2 2.500z" fill="#c87058" stroke="#905040"/><path d="M1.500 22.500l1.500-3 1.500 1.500z" fill="#333"/></svg></button>
                            <button class="ml-[5px]" aria-label="重新加载"><svg class="w-[24px] h-[24px]" viewBox="0 0 24 24"><path d="M18.500 17a7.500 7.500 0 1 1-1-10" fill="none" stroke="#1a8428" stroke-width="6"/><path d="M18 16.500a7.500 7.500 0 1 1-1-9" fill="none" stroke="#44bc50" stroke-width="3.500"/><path d="M21.500 2v9H12z" fill="#30a840" stroke="#1a8428"/></svg></button>
                            <input class="w-[198px] h-[21px] ml-auto px-[2px] bg-white border border-[#7a7a7a] placeholder:text-[#808080]" placeholder="过滤器" aria-label="过滤资源">
                        </div>
                        <div class="flex-1 grid grid-cols-2 gap-[5px]">
                            <div class="bg-white border border-[#828790] pl-[24px]">&lt;resource root&gt;</div>
                            <div class="bg-white border border-[#828790]"></div>
                        </div>
                        <div class="h-[23px] shrink-0 flex items-start pl-[2px]" role="tablist">
                            <button class="w-[103px] h-[21px] border border-t-0 border-[#d9d9d9] bg-[#f0f0f0] flex items-center justify-center" role="tab">信号/槽 编辑器</button>
                            <button class="w-[83px] h-[21px] border border-t-0 border-l-0 border-[#d9d9d9] bg-[#f0f0f0] flex items-center justify-center" role="tab">动作编辑器</button>
                            <button class="w-[86px] h-[23px] border border-t-0 border-l-0 border-[#d9d9d9] bg-white flex items-center justify-center" role="tab" aria-selected="true">资源浏览器</button>
                        </div>
                    </section>
                </aside>
            </main>

            <footer class="h-[19px] shrink-0 flex items-center justify-end gap-px pr-[2px] pt-[7px]">
                <span class="text-[14px] leading-[14px] text-[#999]">CSDN @monsterk1</span>
                <svg class="w-[6px] h-[8px]"><path d="M4 0h2v2H4zM0 3h2v2H0zM4 3h2v2H4zM0 6h2v2H0zM4 6h2v2H4z" fill="#b8b8b8"/></svg>
            </footer>
        </div>

        <!-- Page behind, right of the window -->
        <svg class="w-[7px] h-full shrink-0 bg-linear-to-r from-[#c4c4c4] to-[#e8e8e8]" aria-hidden="true" font-size="10" fill="#555">
            <path d="M0 22.500h7M0 374.500h7M0 424.500h7M0 475.500h7" stroke="#b8b8b8"/><path d="M0 51.500h7M0 75.500h7M0 79.500h7" stroke="#888"/>
            <rect y="76" width="7" height="3" fill="#e0e0c0"/><rect y="225" width="7" height="18" fill="#ece4c8"/><rect y="263" width="7" height="37" fill="#d0d0d0"/>
            <path d="M7 30q-4 1-3 7t3 6z" fill="#3c9c60"/><circle cx="3" cy="356" r="5" fill="#e8e8e8" stroke="#555" stroke-width="2"/><path d="M1 353h4v4z" fill="#555"/><circle cx="15" cy="398" r="13" fill="#000"/>
            <path d="M0 438h4M0 441.500h7" stroke="#222" stroke-width="2"/>
            <text x="0" y="258">ie</text><text x="0" y="465">D</text>
        </svg>
    </div>

    <!-- Strip under the window -->
    <div class="h-[8px] shrink-0 flex overflow-hidden bg-linear-to-b from-[#a8a8a8] to-[#e4e4e4]" aria-hidden="true">
        <svg class="w-[238px] h-[8px] shrink-0"><rect width="214" height="8" fill="#000"/><path d="M2 0h11l-6 8H0z" fill="#e81818"/><path d="M50 0h30v8H50z" fill="#d0d0d0"/><path d="M53 2.500h22M53 5.500h24" stroke="#999"/><path d="M124 0v6M158 0v6M122 6h38" stroke="#b82070" stroke-width="3" stroke-dasharray="4 1"/><path d="M193 0h21v8h-17z" fill="#3870d8"/><path d="M197 0q12 2 12 8h5V0z" fill="#dce8fa"/><path d="M214 0h24v8h-24z" fill="#c8ccd2" opacity=".7"/></svg>
        <svg class="w-[379px] h-[8px] shrink-0"><path d="M281 0h34v8h-34z" fill="#c4c8ce" opacity=".7"/></svg>
        <svg class="w-[96px] h-[8px] shrink-0"><path d="M0 0h4v5h18v3H0zM37 6h55v2H37z" fill="#000"/><path d="M0 5h5v3H0z" fill="#d01818"/><path d="M87 6h9v2h-9z" fill="#3060b0"/></svg>
        <div class="w-[590px] bg-linear-to-b from-[#787878] to-[#bcbcbc] text-right text-[8px] leading-[6px] text-[#787878]">CSDN @monsterk1</div>
    </div>

    <script>
        // Sections of the widget box; closed ones have no items
        const sections = [
            { title: 'Layouts', items: [['Vertical Layout', 'hbars'], ['Horizontal Layout', 'vbars'], ['Grid Layout', 'grid9'], ['Form Layout', 'form6']] },
            { title: 'Spacers', items: [] },
            { title: 'Buttons', items: [['Push Button', 'i-push'], ['Tool Button', 'i-tool'], ['Radio Button', 'i-radio'], ['Check Box', 'i-check'], ['Command Link Button', 'i-link'], ['Dialog Button Box', 'i-dbb']] },
            { title: 'Item Views (Model-Based)', items: [['List View', 'i-list'], ['Tree View', 'i-tree'], ['Table View', 'i-table'], ['Column View', 'i-column'], ['Undo View', 'i-list']] },
            { title: 'Item Widgets (Item-Based)', items: [['List Widget', 'i-list'], ['Tree Widget', 'i-tree'], ['Table Widget', 'i-table']] },
            { title: 'Containers', items: [['Group Box', 'i-group'], ['Scroll Area', 'i-scroll'], ['Tool Box', 'i-toolbox']] }
        ];

        document.getElementById('toolbox').innerHTML = sections.map((section, index) => `
            <button class="w-full h-[17px] flex items-center pl-[2px] border-b border-[#a0a0a0] bg-linear-to-b from-[#f4f4f4] to-[#e2e2e2] ${index && index !== 2 ? 'border-t' : ''}">
                <svg class="w-[10px] h-[10px] ${section.items.length ? 'text-[#404040]' : 'text-[#a0a0a0]'}"><use href="#${section.items.length ? 'chev-down' : 'chev-right'}"/></svg>
                <span class="flex-1 leading-[15px]">${section.title}</span>
            </button>
            <ul>${section.items.map(([label, icon]) => `
                <li class="h-[24px] flex items-center pl-[5px]">
                    <svg class="w-[21px] h-[21px] mr-[6px] text-[#6484a4] fill-[#a4d0f0]"><use href="#${icon}"/></svg><span class="pt-[2px]">${label}</span>
                </li>`).join('')}
            </ul>`).join('');

        // [name, value, state]: state is 'open', 'closed', 'child', 'selected' or 'plain'
        const properties = [
            ['垂直策略', 'Fixed', 'child'],
            ['水平伸展', '0', 'child'],
            ['垂直伸展', '0', 'child'],
            ['minimumSize', '0 x 0', 'open'],
            ['宽度', '0', 'child'],
            ['高度', '0', 'child'],
            ['maximumSize', '16777215 x 16777215', 'open'],
            ['宽度', '16777215', 'child'],
            ['高度', '16777215', 'selected'],
            ['sizeIncrement', '0 x 0', 'closed'],
            ['baseSize', '0 x 0', 'closed'],
            ['palette', '继承', 'plain']
        ];

        // The selected row keeps its stripe only in the indent
        const stripes = ['bg-[#ffffbf]', 'bg-[#ffffdf]'];
        const branches = {
            open: '<svg class="w-[10px] h-[10px] ml-[4px] text-[#404040]"><use href="#chev-down"/></svg>',
            closed: '<svg class="w-[10px] h-[10px] ml-[4px] text-[#a8a888]"><use href="#chev-right"/></svg>'
        };

        document.getElementById('properties').innerHTML = properties.map(([name, value, state], index) => {
            const stripe = stripes[index % 2];
            const fill = state === 'selected' ? 'bg-[#f0f0f0]' : stripe;
            const indent = state === 'child' || state === 'selected' ? 'w-[40px]' : 'w-[20px]';
            return `<tr class="h-[19px] leading-[20px]">
                <td class="p-0 border-r border-b border-[#d8d8d8] ${stripe}"><div class="flex h-[18px]"><span class="${indent} flex items-center">${branches[state] || ''}</span><span class="flex-1 pl-[3px] ${fill}">${name}</span></div></td>
                <td class="p-0 pl-[3px] border-b border-[#d8d8d8] ${fill}"><div class="h-[18px]">${value}</div></td>
            </tr>`;
        }).join('');
    </script>
</body>
</html>
